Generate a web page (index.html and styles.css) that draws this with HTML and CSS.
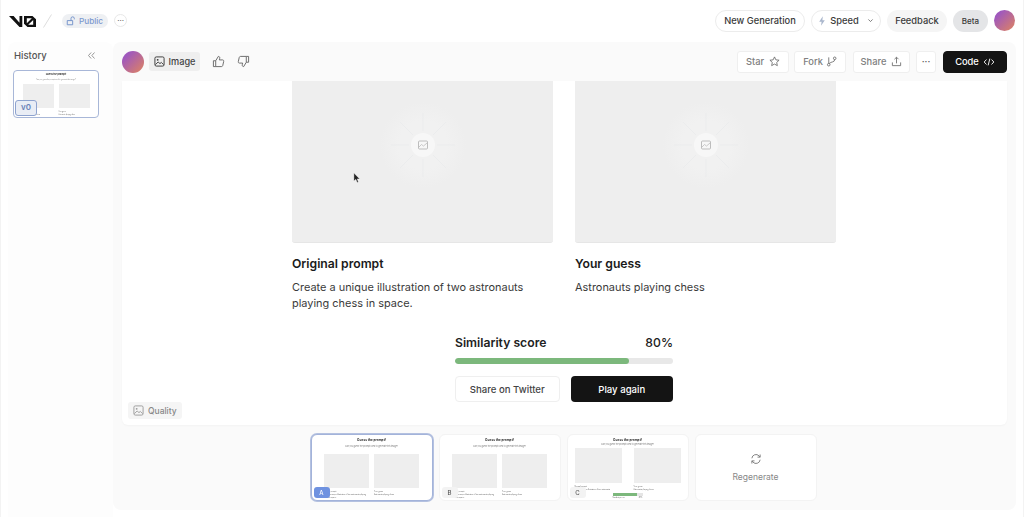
FILE: index.html
```html
<!DOCTYPE html>
<html lang="en">
<head>
<meta charset="utf-8">
<title>v0</title>
<link rel="stylesheet" href="styles.css">
</head>
<body>
<div class="app">
  <header class="topbar">
    <div class="top-left">
      <svg class="logo" viewBox="0 0 28 14" width="28" height="14"><path d="M0 2h4.600L10.500 8.800V2h2.800v11h-2.800z" fill="#111"/><path d="M15 2h8.500L27 5.200V13h-8.500L15 9.800zM17.800 4.300v4.900l5-4.900zM24.200 6 19.200 10.800h5z" fill="#111" fill-rule="evenodd"/></svg>
      <svg class="slash" viewBox="0 0 9 14" width="9" height="14"><path d="M8.500.5.500 13.500" stroke="#d4d4d4" stroke-width=".8"/></svg>
      <span class="public">
        <svg viewBox="0 0 12 12" width="10" height="10"><path d="M1.500 5.500h6.500v5h-6.500zM6 5.500V3a2 2 0 0 1 4 0v1" fill="none" stroke="#6f8fc9" stroke-width="1.100"/></svg>
        Public
      </span>
      <span class="dots-round">···</span>
    </div>
    <div class="top-right">
      <span class="pill outline">New Generation</span>
      <span class="pill outline speed">
        <svg viewBox="0 0 10 12" width="8" height="10"><path d="M6 0 1.500 7h3L3.800 12 8.500 5h-3z" fill="#a9b6cc"/></svg>
        Speed
        <svg viewBox="0 0 10 10" width="7" height="7" class="chev"><path d="m2 3.500 3 3 3-3" fill="none" stroke="#666" stroke-width="1.200"/></svg>
      </span>
      <span class="pill soft">Feedback</span>
      <span class="pill beta">Beta</span>
      <span class="avatar small"></span>
    </div>
  </header>

  <div class="workspace">
    <aside class="history">
      <div class="history-head">
        <span>History</span>
        <svg viewBox="0 0 12 12" width="9" height="9"><path d="M5.500 2 2 6l3.500 4M10 2 6.500 6l3.500 4" fill="none" stroke="#777" stroke-width="1"/></svg>
      </div>
      <div class="history-thumb">
        <div class="mini-title">Guess the prompt!</div>
        <div class="mini-sub">Can you guess the prompt used to generate this image?</div>
        <div class="mini-images"><i></i><i></i></div>
        <div class="mini-captions"><span>Original prompt<br>Create a unique illustration</span><span>Your guess<br>Astronauts playing chess</span></div>
        <span class="version">v0</span>
      </div>
    </aside>

    <main class="panel">
      <div class="toolbar">
        <div class="tool-left">
          <span class="avatar"></span>
          <span class="image-tab">
            <svg viewBox="0 0 12 12" width="11" height="11"><rect x="1" y="1" width="10" height="10" rx="1.500" fill="none" stroke="#333" stroke-width="1"/><circle cx="4" cy="4.200" r="1" fill="#333"/><path d="m1.500 9.500 3-3 2 1.800 1.500-1.300 2.500 2.500" fill="none" stroke="#333" stroke-width="1"/></svg>
            Image
          </span>
          <svg class="thumb" viewBox="0 0 14 14" width="13" height="13"><path d="M1.500 6.200h2.500v6.300H1.500zM4 6.200 6.800 1.500c1.100 0 1.800.8 1.500 2L7.900 5.300h3.500c.9 0 1.400.8 1.200 1.600l-1 4.400c-.2.800-.8 1.200-1.500 1.200H4" fill="none" stroke="#666" stroke-width="1"/></svg>
          <svg class="thumb" viewBox="0 0 14 14" width="13" height="13"><path d="M12.500 7.800H10V1.500h2.500zM10 7.800 7.200 12.500c-1.100 0-1.800-.8-1.500-2l.4-1.800H2.600c-.9 0-1.400-.8-1.200-1.600l1-4.400c.2-.8.800-1.200 1.500-1.200H10" fill="none" stroke="#666" stroke-width="1"/></svg>
        </div>
        <div class="tool-right">
          <span class="btn star">Star
            <svg viewBox="0 0 12 12" width="11" height="11"><path d="m6 1 1.500 3.200 3.500.4-2.600 2.400.7 3.500L6 8.800l-3.100 1.700.7-3.500L1 4.600l3.500-.4z" fill="none" stroke="#666" stroke-width=".9"/></svg>
          </span>
          <span class="btn fork">Fork
            <svg viewBox="0 0 12 12" width="11" height="11"><circle cx="3" cy="9.500" r="1.400" fill="none" stroke="#666" stroke-width=".9"/><circle cx="9.500" cy="2.500" r="1.400" fill="none" stroke="#666" stroke-width=".9"/><path d="M3 8V1.500M9.500 4C9.500 7 5.500 6 3.500 8.200" fill="none" stroke="#666" stroke-width=".9"/></svg>
          </span>
          <span class="btn share">Share
            <svg viewBox="0 0 12 12" width="11" height="11"><path d="M6 8V1.500M3.800 3.500 6 1.300l2.200 2.200M1.500 7v3.500h9V7" fill="none" stroke="#666" stroke-width=".9"/></svg>
          </span>
          <span class="btn more">···</span>
          <span class="btn code">Code
            <svg viewBox="0 0 14 12" width="12" height="10"><path d="M4 3 1.200 6 4 9M10 3l2.800 3L10 9M8 2 6 10" fill="none" stroke="#fff" stroke-width="1.100"/></svg>
          </span>
        </div>
      </div>

      <section class="card">
        <div class="columns">
          <article class="col">
            <div class="placeholder">
              <svg viewBox="0 0 90 90" width="90" height="90"><g stroke="#e8e9eb" stroke-width=".6" fill="none"><path d="M45 13V31M45 59V77M13 45H31M59 45H77M22 22 35 35M68 22 55 35M22 68 35 55M68 68 55 55"/></g><circle cx="45" cy="45" r="12" fill="#f7f7f7"/><rect x="40.500" y="41" width="9" height="8" rx="1" fill="none" stroke="#b5b5b5" stroke-width=".9"/><path d="m41 47 2.500-2.500 2 1.500 3.500-3" fill="none" stroke="#b5b5b5" stroke-width=".7"/></svg>
            </div>
            <h3>Original prompt</h3>
            <p>Create a unique illustration of two astronauts playing chess in space.</p>
          </article>
          <article class="col">
            <div class="placeholder">
              <svg viewBox="0 0 90 90" width="90" height="90"><g stroke="#e8e9eb" stroke-width=".6" fill="none"><path d="M45 13V31M45 59V77M13 45H31M59 45H77M22 22 35 35M68 22 55 35M22 68 35 55M68 68 55 55"/></g><circle cx="45" cy="45" r="12" fill="#f7f7f7"/><rect x="40.500" y="41" width="9" height="8" rx="1" fill="none" stroke="#b5b5b5" stroke-width=".9"/><path d="m41 47 2.500-2.500 2 1.500 3.500-3" fill="none" stroke="#b5b5b5" stroke-width=".7"/></svg>
            </div>
            <h3>Your guess</h3>
            <p>Astronauts playing chess</p>
          </article>
        </div>
        <div class="score">
          <div class="score-head"><span>Similarity score</span><span>80%</span></div>
          <div class="bar"><div class="bar-fill"></div></div>
          <div class="score-actions">
            <span class="action light">Share on Twitter</span>
            <span class="action dark">Play again</span>
          </div>
        </div>
        <span class="quality">
          <svg viewBox="0 0 12 12" width="11" height="11"><rect x="1" y="1" width="10" height="10" rx="1.500" fill="none" stroke="#999" stroke-width="1"/><circle cx="4" cy="4.200" r="1" fill="#999"/><path d="m1.500 9.500 3-3 2 1.800 1.500-1.300 2.500 2.500" fill="none" stroke="#999" stroke-width="1"/></svg>
          Quality
        </span>
        <svg class="cursor" viewBox="0 0 9 13" width="8" height="12"><path d="M1 1v9l2.200-2 1.500 3.500 1.400-.6L4.700 7.500H7.500z" fill="#222" stroke="#fff" stroke-width=".4"/></svg>
      </section>

      <div class="variants">
        <div class="variant selected">
          <div class="mini-title">Guess the prompt!</div>
          <div class="mini-sub">Can you guess the prompt used to generate this image?</div>
          <div class="mini-images"><i></i><i></i></div>
          <div class="mini-captions"><span>Original prompt<br>Create a unique illustration of two astronauts playing chess in space.</span><span>Your guess<br>Astronauts playing chess</span></div>
          <span class="letter active">A</span>
        </div>
        <div class="variant">
          <div class="mini-title">Guess the prompt!</div>
          <div class="mini-sub">Can you guess the prompt used to generate this image?</div>
          <div class="mini-images"><i></i><i></i></div>
          <div class="mini-captions"><span>Original prompt<br>Create a unique illustration of two astronauts playing chess in space.</span><span>Your guess<br>Astronauts playing chess</span></div>
          <span class="letter">B</span>
        </div>
        <div class="variant third">
          <div class="mini-title">Guess the prompt!</div>
          <div class="mini-sub">Can you guess the prompt used to generate this image?</div>
          <div class="mini-images"><i></i><i></i></div>
          <div class="mini-captions"><span>Original prompt<br>Create a unique illustration of two astronauts</span><span>Your guess<br>Astronauts playing chess</span></div>
          <div class="mini-bar"><b></b></div>
          <div class="mini-score"><span>Similarity score</span><span>80%</span></div>
          <span class="letter">C</span>
        </div>
        <div class="variant regen">
          <svg viewBox="0 0 16 16" width="12" height="12"><path d="M2.500 7A5.500 5.500 0 0 1 12 3.800L13.500 5.500M13.500 2v3.500H10M13.500 9A5.500 5.500 0 0 1 4 12.200L2.500 10.500M2.500 14v-3.500H6" fill="none" stroke="#777" stroke-width="1.200"/></svg>
          <span>Regenerate</span>
        </div>
      </div>
    </main>
  </div>
</div>
</body>
</html>
```

FILE: styles.css
```css
* { box-sizing: border-box; }
html, body { margin: 0; height: 100%; overflow: hidden; }
body { background: #fff; font-family: Inter, "Liberation Sans", sans-serif; color: #171717; }
.app { display: flex; flex-direction: column; height: 517px; width: 1024px; border-left: 1px solid #f3f3f3; border-right: 1px solid #f3f3f3; }

.topbar { height: 42px; flex: none; display: flex; justify-content: space-between; align-items: center; padding: 0 8px 1px 8px; }
.top-left, .top-right { display: flex; align-items: center; }
.logo { margin-right: 6px; }
.slash { margin-right: 10px; }
.public { display: flex; align-items: center; gap: 3px; height: 14px; padding: 0 5px 0 4px; border-radius: 7px; background: #eef0f3; color: #7d99cf; font-size: 8.200px; font-weight: 500; }
.dots-round { margin-left: 6px; width: 13px; height: 13px; border-radius: 50%; border: 1px solid #e8e8e8; font-size: 8px; line-height: 10px; text-align: center; color: #555; }
.top-right { gap: 6px; }
.pill { height: 22px; border-radius: 11px; display: flex; align-items: center; justify-content: center; font-size: 9.300px; font-weight: 500; color: #3a3a3a; white-space: nowrap; }
.outline { border: 1px solid #ececec; width: 90px; background: #fff; }
.outline.speed { gap: 4px; width: 70px; }
.chev { margin-left: 4px; }
.soft { background: #f5f5f5; width: 60px; }
.beta { background: #e4e5e7; width: 35px; font-size: 8px; }
.avatar { width: 22px; height: 22px; border-radius: 50%; background: linear-gradient(135deg, #9f58bd 20%, #d47c70 85%); flex: none; }
.avatar.small { width: 21px; height: 21px; }

.workspace { flex: 1; display: flex; min-height: 0; }
.history { width: 105px; margin-left: 7px; background: #fdfdfd; border-radius: 8px 8px 0 0; padding: 5px 5px 0 5px; flex: none; }
.history-head { display: flex; justify-content: space-between; align-items: center; height: 16px; padding: 0 12px 0 1px; font-size: 9.500px; color: #555; font-weight: 500; margin-bottom: 7px; }
.history-thumb { position: relative; width: 86px; height: 48px; background: #fff; border: 1px solid #a8b7d8; border-radius: 4px; padding-top: 1px; overflow: hidden; }
.history-thumb .mini-title { font-size: 2.300px; }
.history-thumb .mini-sub { font-size: 1.500px; }
.history-thumb .mini-images { margin-top: 2px; }
.history-thumb .mini-images i { width: 31px; height: 24px; }
.history-thumb .mini-captions { font-size: 1.400px; }
.history-thumb .mini-captions span { width: 31px; }
.version { position: absolute; left: 1px; bottom: 1px; width: 22px; height: 16px; border: 1.500px solid #8ea3cf; border-radius: 3px; background: #e9edf5; color: #6a82b8; font-size: 8px; font-weight: 600; line-height: 13px; text-align: center; }

.panel { flex: 1; margin: 0 7px 7px 0; background: #fafafa; border-radius: 8px; padding: 0 9px; display: flex; flex-direction: column; min-width: 0; }
.toolbar { height: 39px; flex: none; display: flex; justify-content: space-between; align-items: center; }
.tool-left, .tool-right { display: flex; align-items: center; }
.image-tab { display: flex; align-items: center; gap: 4px; margin-left: 5px; height: 19px; width: 51px; justify-content: center; background: #efefef; border-radius: 3px; font-size: 9.200px; color: #444; font-weight: 500; }
.thumb { margin-left: 12px; }
.tool-right { gap: 5px; }
.btn { display: flex; align-items: center; justify-content: center; gap: 5px; height: 22px; background: #fff; border: 1px solid #efefef; border-radius: 3px; font-size: 9.300px; font-weight: 500; color: #808080; }
.star, .fork { width: 52px; }
.fork { gap: 3px; }
.share { width: 57px; margin-left: 2px; }
.more { width: 20px; margin-left: 1px; color: #555; }
.btn.code { width: 64px; margin-left: 2px; background: #141414; border-color: #141414; color: #fff; border-radius: 4px; gap: 4px; }

.card { position: relative; height: 344px; flex: none; background: #fff; border-radius: 0 0 6px 6px; display: flex; flex-direction: column; padding-left: 170px; box-shadow: 0 1px 2px rgba(0,0,0,.03); }
.columns { display: flex; gap: 22px; }
.col { width: 261px; }
.placeholder { height: 162px; background: #eeeeee; border-radius: 0 0 3px 3px; border-bottom: 1px solid #e6e6e6; display: flex; align-items: center; justify-content: center; }
.placeholder svg { margin-bottom: 34px; background: radial-gradient(circle, #f1f1f1 0, #f1f1f1 38%, #eeeeee 68%); }
h3 { margin: 13px 0 7px; font-size: 12.200px; line-height: 16px; font-weight: 600; color: #1a1a1a; }
.col p { margin: 0; font-size: 10.950px; line-height: 16px; color: #3a3a3a; }
.score { width: 218px; margin: 24px 0 0 163px; }
.score-head { display: flex; justify-content: space-between; font-size: 12.200px; line-height: 16px; font-weight: 600; color: #222; }
.score-head span + span { font-weight: 500; }
.bar { margin-top: 7px; height: 6px; border-radius: 3px; background: #e8e8e8; overflow: hidden; }
.bar-fill { width: 80%; height: 100%; border-radius: 3px; background: #7cb87c; }
.score-actions { display: flex; gap: 11px; margin-top: 12px; }
.action { flex: 1; height: 26px; display: flex; align-items: center; justify-content: center; font-size: 9.600px; font-weight: 500; border-radius: 4px; }
.light { border: 1px solid #efefef; color: #444; background: #fff; }
.dark { background: #141414; color: #fff; }
.quality { position: absolute; left: 6px; bottom: 6px; display: flex; align-items: center; gap: 4px; height: 17px; padding: 0 5px; border-radius: 3px; background: #f5f5f5; font-size: 8.500px; color: #888; font-weight: 500; }
.cursor { position: absolute; left: 231px; top: 91px; }

.variants { display: flex; gap: 6px; justify-content: center; margin-top: 9px; padding-right: 2px; }
.variant { position: relative; width: 122px; height: 67px; background: #fff; border: 1px solid #f3f3f3; border-radius: 6px; padding-top: 3px; overflow: hidden; }
.variant.selected { border: 1px solid #a3b3da; box-shadow: 0 0 0 1px #b4c1e0; }
.mini-title, .mini-sub, .mini-images, .mini-captions, .mini-bar, .mini-score, .letter { filter: blur(.25px); }
.mini-title { font-size: 3.200px; line-height: 5px; font-weight: 700; text-align: center; color: #222; white-space: nowrap; }
.mini-sub { margin-top: 1px; font-size: 2px; line-height: 4px; text-align: center; color: #777; white-space: nowrap; }
.mini-images { display: flex; justify-content: center; gap: 5px; margin-top: 6px; }
.mini-images i { display: block; width: 45px; height: 34px; background: #eeeeee; }
.mini-captions { display: flex; justify-content: center; gap: 5px; margin-top: 2px; font-size: 1.700px; line-height: 3px; color: #555; }
.mini-captions span { width: 45px; }
.third .mini-sub { margin-top: -1px; }
.third .mini-images { margin-top: 2px; gap: 12px; }
.third .mini-images i { width: 47px; height: 35px; }
.third .mini-captions { gap: 12px; }
.third .mini-captions span { width: 47px; }
.mini-bar { width: 30px; height: 3px; margin: 2px auto 0; background: #e5e5e5; }
.mini-bar b { display: block; width: 80%; height: 100%; background: #7cb87c; }
.mini-score { width: 30px; margin: 0 auto; display: flex; justify-content: space-between; font-size: 1.700px; line-height: 3px; color: #555; }
.letter { position: absolute; left: 2px; bottom: 2px; width: 16px; height: 11px; border-radius: 3px; background: #f3f3f3; color: #555; font-size: 6px; line-height: 11px; text-align: center; font-weight: 500; }
.letter.active { background: #6f92e0; color: #fff; }
.regen { display: flex; flex-direction: column; align-items: center; justify-content: center; gap: 7px; padding-top: 0; font-size: 8.500px; color: #888; }
```
